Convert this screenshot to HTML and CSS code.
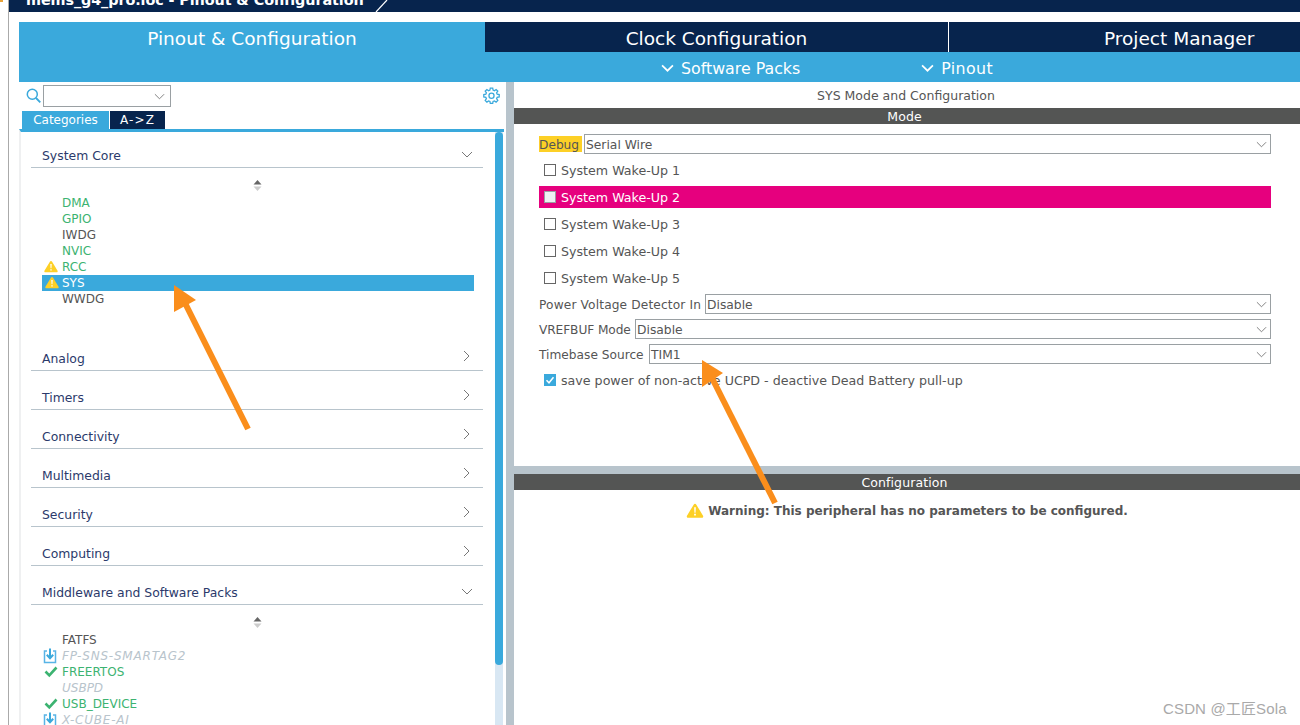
FILE: index.html
```html
<!DOCTYPE html>
<html lang="en">
<head>
<meta charset="utf-8">
<title>Pinout &amp; Configuration</title>
<link rel="stylesheet" href="styles.css">
</head>
<body>
<svg width="0" height="0" class="defs">
  <defs>
    <symbol id="warn" viewBox="0 0 16 14"><path d="M8 .6c.5 0 .9.3 1.1.7l6.400 10.600c.5.8-.1 1.800-1 1.800H1.500c-.9 0-1.500-1-1-1.800L6.900 1.300C7.100.9 7.500.6 8 .6z" fill="#fdd026"/><path d="M7.200 4h1.600l-.3 5h-1zM7.200 10h1.600v1.600H7.200z" fill="#fff"/></symbol>
    <symbol id="down" viewBox="0 0 14 16"><path d="M4 3H1.500v11.500h11V3H10" fill="none" stroke="#58b4e6" stroke-width="1.500"/><path d="M7 .5v9M3.800 6.800L7 10.200l3.200-3.400" fill="none" stroke="#3aa9dc" stroke-width="2"/></symbol>
    <symbol id="check" viewBox="0 0 14 12"><path d="M1.500 6l3.800 3.800L12.500 2" fill="none" stroke="#3cb371" stroke-width="2.600"/></symbol>
    <symbol id="chev" viewBox="0 0 12 7"><path d="M1 1l5 5 5-5" fill="none" stroke="currentColor" stroke-width="1"/></symbol>
    <symbol id="chevr" viewBox="0 0 7 12"><path d="M1 1l5 5-5 5" fill="none" stroke="currentColor" stroke-width="1"/></symbol>
    <symbol id="updown" viewBox="0 0 9 11"><path d="M4.500 0L8.500 4.500H.5z" fill="#666"/><path d="M.5 6.500h8L4.500 11z" fill="#ccc"/></symbol>
  </defs>
</svg>

<div class="edge"><i class="edge-mark"></i></div>

<div class="titlebar"><span class="titletext">mems_g4_pro.ioc - Pinout &amp; Configuration</span><svg class="slash" width="14" height="12" viewBox="0 0 14 12"><path d="M1 12L12 0" stroke="#fff" stroke-width="1.200"/></svg></div>

<div class="app">
  <div class="tabs">
    <div class="tab tab-active">Pinout &amp; Configuration</div>
    <div class="tab tab-clock">Clock Configuration</div>
    <div class="tab tab-project">Project Manager</div>
  </div>
  <div class="subbar">
    <div class="subitem sub-packs"><svg class="subchev" viewBox="0 0 12 7"><path d="M1 1l5 5 5-5" fill="none" stroke="#fff" stroke-width="1.600"/></svg>Software Packs</div>
    <div class="subitem sub-pinout"><svg class="subchev" viewBox="0 0 12 7"><path d="M1 1l5 5 5-5" fill="none" stroke="#fff" stroke-width="1.600"/></svg>Pinout</div>
  </div>

  <div class="panels">
    <section class="left">
      <div class="searchrow">
        <svg class="searchicon" width="15" height="15" viewBox="0 0 15 15"><circle cx="6.300" cy="6.300" r="5" fill="none" stroke="#3aa9dc" stroke-width="1.500"/><path d="M10 10l4.300 4.300" stroke="#3aa9dc" stroke-width="1.800"/></svg>
        <div class="searchbox"><svg class="chev chev-search"><use href="#chev"/></svg></div>
        <svg class="gear" width="17" height="17" viewBox="0 0 24 24"><path d="M10.300 1.500h3.400l.5 2.900 1.900.8 2.400-1.700 2.400 2.400-1.700 2.400.8 1.900 2.900.5v3.400l-2.900.5-.8 1.900 1.700 2.400-2.400 2.400-2.400-1.700-1.900.8-.5 2.900h-3.400l-.5-2.900-1.900-.8-2.400 1.700-2.400-2.400 1.700-2.400-.8-1.900-2.900-.5v-3.400l2.900-.5.8-1.900-1.700-2.400 2.400-2.400 2.400 1.700 1.900-.8z" fill="none" stroke="#3aa9dc" stroke-width="1.800"/><circle cx="12" cy="12.300" r="3.600" fill="none" stroke="#3aa9dc" stroke-width="1.800"/></svg>
      </div>
      <div class="cattabs">
        <div class="cattab cat-on">Categories</div>
        <div class="cattab cat-off">A-&gt;Z</div>
      </div>
      <div class="tree">
        <div class="scrollbar"><div class="thumb"></div></div>
        <div class="sec"><span>System Core</span><svg class="secchev"><use href="#chev"/></svg></div>
        <div class="secbody core">
          <svg class="updown"><use href="#updown"/></svg>
          <ul class="list">
            <li class="ok">DMA</li>
            <li class="ok">GPIO</li>
            <li>IWDG</li>
            <li class="ok">NVIC</li>
            <li class="ok"><svg class="ico"><use href="#warn"/></svg>RCC</li>
            <li class="sel"><svg class="ico"><use href="#warn"/></svg>SYS</li>
            <li>WWDG</li>
          </ul>
        </div>
        <div class="sec"><span>Analog</span><svg class="secchevr"><use href="#chevr"/></svg></div>
        <div class="sec"><span>Timers</span><svg class="secchevr"><use href="#chevr"/></svg></div>
        <div class="sec"><span>Connectivity</span><svg class="secchevr"><use href="#chevr"/></svg></div>
        <div class="sec"><span>Multimedia</span><svg class="secchevr"><use href="#chevr"/></svg></div>
        <div class="sec"><span>Security</span><svg class="secchevr"><use href="#chevr"/></svg></div>
        <div class="sec"><span>Computing</span><svg class="secchevr"><use href="#chevr"/></svg></div>
        <div class="sec"><span>Middleware and Software Packs</span><svg class="secchev"><use href="#chev"/></svg></div>
        <div class="secbody">
          <svg class="updown"><use href="#updown"/></svg>
          <ul class="list">
            <li>FATFS</li>
            <li class="off hy"><svg class="ico ico-down"><use href="#down"/></svg>FP-SNS-SMARTAG2</li>
            <li class="ok"><svg class="ico"><use href="#check"/></svg>FREERTOS</li>
            <li class="off">USBPD</li>
            <li class="ok"><svg class="ico"><use href="#check"/></svg>USB_DEVICE</li>
            <li class="off hy"><svg class="ico ico-down"><use href="#down"/></svg>X-CUBE-AI</li>
          </ul>
        </div>
      </div>
    </section>

    <div class="vsplit"></div>

    <section class="right">
      <div class="modepane">
        <div class="heading">SYS Mode and Configuration</div>
        <div class="bar">Mode</div>
        <div class="form">
          <div class="field"><label class="flabel warnlabel">Debug</label><div class="select">Serial Wire<svg class="chev"><use href="#chev"/></svg></div></div>
          <div class="checks">
            <div class="checkrow"><i class="box"></i>System Wake-Up 1</div>
            <div class="checkrow pink"><i class="box"></i>System Wake-Up 2</div>
            <div class="checkrow"><i class="box"></i>System Wake-Up 3</div>
            <div class="checkrow"><i class="box"></i>System Wake-Up 4</div>
            <div class="checkrow"><i class="box"></i>System Wake-Up 5</div>
          </div>
          <div class="fields">
            <div class="field"><label class="flabel l-power">Power Voltage Detector In</label><div class="select">Disable<svg class="chev"><use href="#chev"/></svg></div></div>
            <div class="field"><label class="flabel l-vref">VREFBUF Mode</label><div class="select">Disable<svg class="chev"><use href="#chev"/></svg></div></div>
            <div class="field"><label class="flabel l-time">Timebase Source</label><div class="select">TIM1<svg class="chev"><use href="#chev"/></svg></div></div>
          </div>
          <div class="checkrow saverow"><i class="box boxon"><svg viewBox="0 0 12 12" width="12" height="12"><path d="M2.500 6.200l2.500 2.600 4.500-5.600" fill="none" stroke="#fff" stroke-width="1.500"/></svg></i>save power of non-active UCPD - deactive Dead Battery pull-up</div>
        </div>
      </div>
      <div class="hsplit"></div>
      <div class="configpane">
        <div class="bar">Configuration</div>
        <div class="warning"><svg class="warnbig"><use href="#warn"/></svg>Warning: This peripheral has no parameters to be configured.</div>
      </div>
    </section>
  </div>
</div>

<svg class="arrows" width="1300" height="725" viewBox="0 0 1300 725">
  <path d="M248 429L185 303" stroke="#fa8e1c" stroke-width="6"/>
  <path d="M174 285L196 300L174 312z" fill="#fa8e1c"/>
  <path d="M775 503L712 378" stroke="#fa8e1c" stroke-width="6"/>
  <path d="M702 360L723 373L702 387z" fill="#fa8e1c"/>
</svg>

<div class="watermark">CSDN @工匠Sola</div>
</body>
</html>
```

FILE: styles.css
```css
* { box-sizing: border-box; }
html, body { margin: 0; padding: 0; }
body {
  width: 1300px;
  height: 725px;
  overflow: hidden;
  position: relative;
  background: #fff;
  font-family: "DejaVu Sans", sans-serif;
  font-size: 12px;
  color: #555;
}
.defs { position: absolute; }

.edge {
  position: absolute;
  left: 0;
  top: 0;
  width: 9px;
  height: 725px;
  border-right: 1px solid #aaa;
}
.edge-mark {
  display: block;
  width: 3px;
  height: 2px;
  margin-left: 0;
  background: #e8a33a;
}

.titlebar {
  height: 12px;
  margin-left: 9px;
  background: #07244d;
  position: relative;
  overflow: hidden;
  display: flex;
  align-items: flex-end;
  padding-left: 17px;
}
.titletext {
  font-weight: 700;
  font-size: 14.400px;
  color: #fff;
  line-height: 16px;
  white-space: nowrap;
  margin-bottom: 4px;
  letter-spacing: -.1px;
}
.slash { position: absolute; left: 366px; top: 0; }

.app {
  margin: 10px 0 0 19px;
  display: flex;
  flex-direction: column;
}
.tabs { display: flex; height: 30px; background: #07244d; }
.tab {
  color: #fff;
  font-size: 18.500px;
  line-height: 33px;
  white-space: nowrap;
  text-align: center;
}
.tab-active { width: 466px; background: #3aa9dc; }
.tab-clock { width: 463px; margin-left: 1px; border-right: 1px solid #fff; padding-right: 1px; }
.tab-project { width: 351px; padding-left: 155px; text-align: left; }

.subbar { height: 30px; background: #3aa9dc; position: relative; display: flex; }
.subitem {
  color: #fff;
  font-size: 15.800px;
  line-height: 26px;
  white-space: nowrap;
  display: flex;
  align-items: center;
  padding-top: 4px;
}
.sub-packs { margin-left: 642px; }
.sub-pinout { margin-left: 121px; letter-spacing: .4px; }
.subchev { width: 13px; height: 8px; margin: -2px 7px 0 0; }

.panels { display: flex; height: 643px; }

.left { width: 487px; position: relative; }
.searchrow { height: 26px; display: flex; align-items: center; padding: 0 0 0 7px; position: relative; }
.searchicon { flex: none; margin-top: 1px; }
.searchbox {
  width: 128px;
  height: 22px;
  margin: 1px 0 0 2px;
  border: 1px solid #9aa0a3;
  position: relative;
  background: #fff;
}
.chev {
  position: absolute;
  right: 3px;
  top: 6px;
  width: 11px;
  height: 7px;
  color: #777;
}
.chev-search { right: 5px; top: 7px; }
.gear { position: absolute; right: 6px; top: 5px; }

.cattabs { display: flex; margin: 3px 0 0 3px; height: 18px; gap: 1px; }
.cattab {
  font-size: 12px;
  line-height: 19px;
  text-align: center;
  color: #fff;
}
.cat-on { width: 87px; background: #3aa9dc; }
.cat-off { width: 55px; background: #07244d; letter-spacing: 1.100px; }

.tree {
  height: 596px;
  width: 485px;
  border-top: 3px solid #3aa9dc;
  border-left: 2px solid #eff0f1;
  position: relative;
  overflow: hidden;
  padding: 0 21px 0 10px;
}
.scrollbar {
  position: absolute;
  left: 474px;
  top: 0;
  width: 8px;
  height: 100%;
  background: #d8e7f3;
}
.thumb {
  height: 533px;
  background: #3aa9dc;
  border-radius: 4px;
}
.sec {
  height: 39px;
  border-bottom: 1px solid #b8c4cc;
  display: flex;
  align-items: flex-end;
  justify-content: space-between;
  padding: 0 10px 3px 11px;
  font-size: 12.400px;
  line-height: 16px;
  color: #2b3a6b;
  position: relative;
}
.scrollbar + .sec { height: 36px; }
.secchev { width: 12px; height: 7px; color: #777; margin-bottom: 6px; }
.secchevr { width: 7px; height: 12px; color: #777; margin-bottom: 5px; margin-right: 3px; }
.secbody { position: relative; padding: 12px 0 0 11px; }
.core { height: 164px; }
.updown { display: block; width: 9px; height: 11px; margin: 0 0 0 211px; }
.list { list-style: none; margin: 4px 0 0; padding: 0; width: 432px; }
.list li {
  height: 16px;
  line-height: 16px;
  padding-left: 20px;
  font-size: 12px;
  color: #555;
  position: relative;
}
.list .ok { color: #3cb371; }
.list .off { color: #b8c4cc; font-style: italic; }
.list .hy { letter-spacing: .8px; }
.list .sel { background: #3aa9dc; color: #fff; }
.ico { position: absolute; left: 2px; top: 1px; width: 14px; height: 13px; }
.sel .ico { left: 3px; }
.ico-down { height: 16px; top: 0; left: 1px; }

.vsplit { width: 8px; background: #b8c4cc; flex: none; }

.right { flex: none; width: 786px; display: flex; flex-direction: column; }
.modepane { height: 384px; }
.heading { height: 26px; line-height: 28px; text-align: center; font-size: 12.500px; color: #555; padding-right: 2px; }
.bar {
  height: 16px;
  line-height: 18px;
  background: #545554;
  color: #fff;
  font-size: 12.500px;
  letter-spacing: .1px;
  text-align: center;
  padding-right: 5px;
}
.form { padding: 10px 29px 0 25px; }
.field { display: flex; gap: 4px; height: 20px; align-items: stretch; }
.flabel { line-height: 22px; white-space: nowrap; font-size: 12.200px; flex: none; }
.l-power { width: 162px; letter-spacing: .14px; }
.l-vref { width: 92px; letter-spacing: -.1px; }
.l-time { width: 106px; }
.warnlabel { background: #fdd026; height: 16px; line-height: 18px; margin: 2px -2px 0 0; width: 43px; }
.select {
  flex: 1;
  border: 1px solid #9aa0a3;
  line-height: 20px;
  padding-left: 1px;
  position: relative;
  font-size: 12.300px;
  background: #fff;
}
.checks { margin-top: 5px; }
.checkrow {
  height: 22px;
  margin-bottom: 5px;
  display: flex;
  align-items: center;
  padding: 0 0 0 5px;
  font-size: 12.650px;
  white-space: nowrap;
}
.pink { background: #e6007e; color: #fff; }
.box {
  width: 12px;
  height: 12px;
  border: 1px solid #666;
  margin: 0 5px 0 0;
  background: #fff;
  flex: none;
  display: block;
}
.pink .box { background: #eef0f2; border-color: #9aa0a3; }
.boxon { background: #3aa9dc; border: 0; }
.boxon svg { display: block; }
.fields { display: flex; flex-direction: column; gap: 5px; }
.saverow { margin-top: 5px; }

.hsplit { height: 8px; background: #b8c4cc; }
.configpane { flex: 1; }
.warning {
  display: flex;
  justify-content: center;
  align-items: center;
  margin-top: 13px;
  font-weight: 700;
  font-size: 12px;
  height: 16px;
  white-space: nowrap;
  padding-right: 0;
}
.warnbig { width: 18px; height: 15px; margin: -1px 4px 0 0; }

.arrows { position: absolute; left: 0; top: 0; pointer-events: none; }
.watermark {
  position: absolute;
  left: 1163px;
  top: 701px;
  font-family: "Liberation Sans", "Noto Sans CJK SC", sans-serif;
  font-size: 15px;
  letter-spacing: .15px;
  line-height: 16px;
  color: #a9a9a9;
  white-space: nowrap;
}
```
